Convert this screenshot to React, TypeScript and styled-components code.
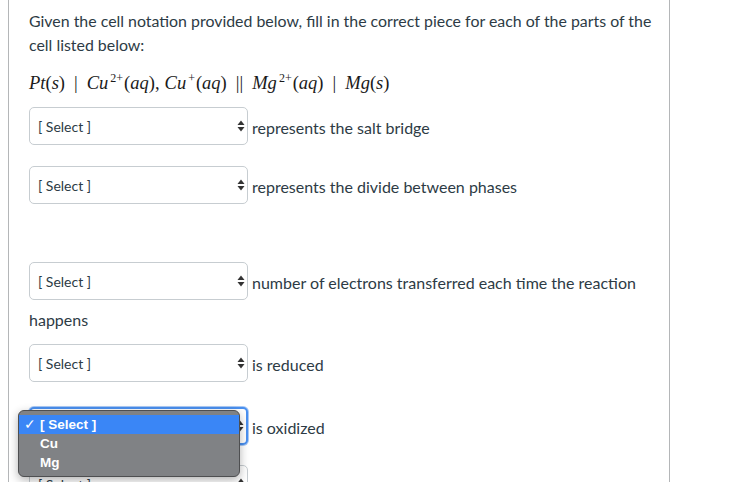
import React from 'react'
import styled, { createGlobalStyle } from 'styled-components'

const Global = createGlobalStyle`
  html, body {
    margin: 0;
    padding: 0;
    background: #ffffff;
    overflow: hidden;
  }
`

const Page = styled.div`
  width: 730px;
  height: 482px;
  overflow: hidden;
  position: relative;
`

const Frame = styled.div`
  margin-left: 8px;
  width: 662px;
  min-height: 520px;
  border-left: 1px solid #b4b6b8;
  border-right: 1px solid #b4b6b8;
  padding: 9px 12px 0 20px;
  box-sizing: border-box;
  font-family: Lato, 'Open Sans', sans-serif;
  color: #2d3b45;
  position: relative;
`

const Intro = styled.p`
  margin: 0;
  font-size: 15.9px;
  line-height: 24px;
`

const Formula = styled.div`
  margin-top: 14px;
  font-family: 'Liberation Serif', 'DejaVu Serif', serif;
  font-size: 18.5px;
  line-height: 24px;
  color: #1a1a1a;
  white-space: nowrap;
`

const V = styled.i`
  font-style: italic;
`

const Sup = styled.span`
  display: inline-block;
  font-size: 12px;
  transform: translateY(-7px);
  font-style: normal;
  margin: 0 1px 0 2px;
`

const Bar = styled.span`
  margin: 0 9px;
`

const Comma = styled.span`
  margin-right: 5px;
`

const Row = styled.div<{ $top: number }>`
  display: flex;
  align-items: center;
  margin-top: ${p => p.$top}px;
  font-size: 16px;
`

const Select = styled.div<{ $focus?: boolean }>`
  width: 219px;
  height: 38px;
  box-sizing: border-box;
  border: ${p => (p.$focus ? '2px solid #4a90f0' : '1px solid #c7cdd1')};
  box-shadow: ${p => (p.$focus ? '0 0 0 1px #a9c9f5' : 'none')};
  border-radius: 5px;
  display: flex;
  align-items: center;
  justify-content: space-between;
  padding: 0 2px 0 8px;
  font-size: 14px;
  color: #2d3b45;
  background: #fff;
  flex-shrink: 0;
`

const Label = styled.span`
  margin-left: 4px;
  margin-top: 3px;
`

const Plain = styled.p`
  margin: 10px 0 0 0;
  font-size: 16px;
  line-height: 20px;
`

const Popup = styled.div`
  position: absolute;
  left: 18px;
  top: 410px;
  width: 222px;
  height: 67px;
  box-sizing: border-box;
  background: #808285;
  border: 1px solid #4e4f51;
  border-radius: 6px;
  box-shadow: 0 3px 10px rgba(0, 0, 0, 0.3);
  padding-top: 4px;
  font-family: 'Liberation Sans', Arial, sans-serif;
  font-size: 13.5px;
  font-weight: bold;
  color: #ffffff;
  z-index: 5;
`

const Option = styled.div<{ $active?: boolean }>`
  height: 19px;
  line-height: 19px;
  display: flex;
  background: ${p => (p.$active ? '#3a86f6' : 'transparent')};
`

const Check = styled.span`
  width: 21px;
  padding-left: 5px;
  box-sizing: border-box;
  font-weight: normal;
`

const Arrows = () => (
  <svg width="8" height="12" viewBox="0 0 8 12">
    <path d="M4 0.5 L7.5 5 H0.5 Z" fill="#333" />
    <path d="M4 11.5 L7.5 7 H0.5 Z" fill="#333" />
  </svg>
)

const Dropdown = (props: { focus?: boolean }) => (
  <Select $focus={props.focus}>
    <span>[ Select ]</span>
    <Arrows />
  </Select>
)

const App = () => (
  <Page>
    <Global />
    <Frame>
      <Intro>
        Given the cell notation provided below, fill in the correct piece for each of the parts of the
        cell listed below:
      </Intro>
      <Formula>
        <V>Pt</V>(<V>s</V>)<Bar>|</Bar>
        <V>Cu</V><Sup>2+</Sup>(<V>aq</V>)<Comma>,</Comma><V>Cu</V><Sup>+</Sup>(<V>aq</V>)<Bar>||</Bar>
        <V>Mg</V><Sup>2+</Sup>(<V>aq</V>)<Bar>|</Bar>
        <V>Mg</V>(<V>s</V>)
      </Formula>
      <Row $top={10}>
        <Dropdown />
        <Label>represents the salt bridge</Label>
      </Row>
      <Row $top={21}>
        <Dropdown />
        <Label>represents the divide between phases</Label>
      </Row>
      <Row $top={58}>
        <Dropdown />
        <Label>number of electrons transferred each time the reaction</Label>
      </Row>
      <Plain>happens</Plain>
      <Row $top={14}>
        <Dropdown />
        <Label>is reduced</Label>
      </Row>
      <Row $top={25}>
        <Dropdown focus />
        <Label>is oxidized</Label>
      </Row>
      <Row $top={20}>
        <Dropdown />
      </Row>
    </Frame>
    <Popup>
      <Option $active>
        <Check>✓</Check>[ Select ]
      </Option>
      <Option>
        <Check />Cu
      </Option>
      <Option>
        <Check />Mg
      </Option>
    </Popup>
  </Page>
)

export default App
